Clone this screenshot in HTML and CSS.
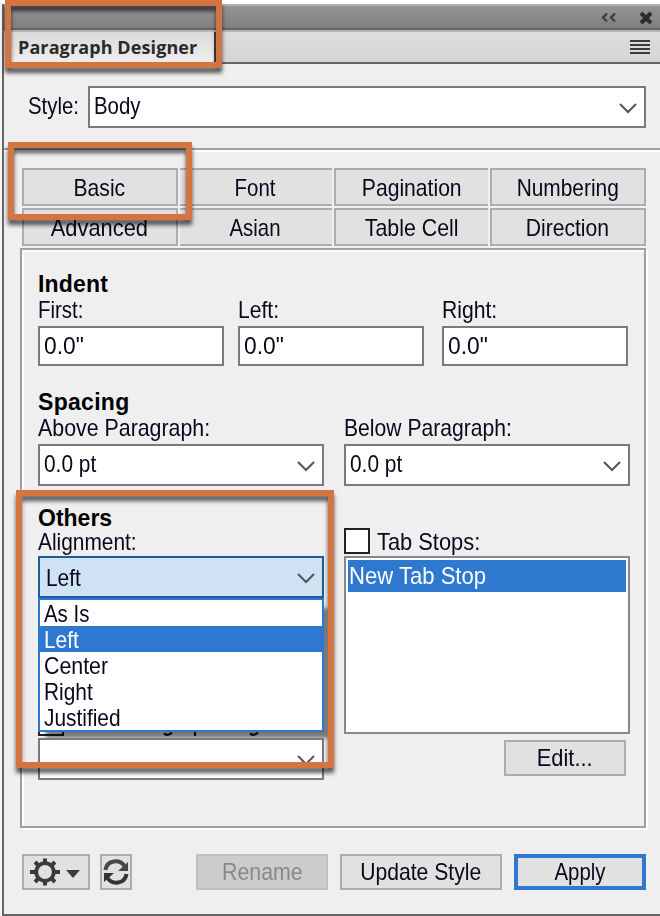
FILE: index.html
```html
<!DOCTYPE html>
<html lang="en">
<head>
<meta charset="utf-8">
<title>Paragraph Designer</title>
<link rel="stylesheet" href="styles.css">
</head>
<body>
<main class="window">
  <header class="titlebar">
    <svg class="collapse" width="16" height="12" viewBox="0 0 16 12"><path d="M6 1.500 2 5.500 6 9.500M14 1.500 10 5.500 14 9.500" fill="none" stroke="#404040" stroke-width="2.400"/></svg>
    <svg class="close" width="14" height="14" viewBox="0 0 14 14"><path d="M2 2 12 12M12 2 2 12" fill="none" stroke="#2b2b2b" stroke-width="4"/></svg>
  </header>
  <div class="tabbar">
    <div class="tab"><span class="tabname">Paragraph Designer</span></div>
    <div class="burger"><i></i><i></i><i></i><i></i></div>
  </div>
  <section class="style-row">
    <span class="t n85 style-label">Style:</span>
    <div class="field combo style-combo"><span class="t n85">Body</span><svg class="chev" viewBox="0 0 18 12"><path d="M1 2 9 10 17 2"/></svg></div>
  </section>
  <nav class="tabs">
    <button class="btn"><span class="t n88">Basic</span></button>
    <button class="btn no-left no-right"><span class="t n85">Font</span></button>
    <button class="btn no-right"><span class="t n88">Pagination</span></button>
    <button class="btn"><span class="t n87">Numbering</span></button>
    <button class="btn"><span class="t n91">Advanced</span></button>
    <button class="btn no-left no-right"><span class="t n85">Asian</span></button>
    <button class="btn no-right"><span class="t n89">Table Cell</span></button>
    <button class="btn"><span class="t n88">Direction</span></button>
  </nav>
  <section class="group">
    <div class="indent">
      <h2>Indent</h2>
      <div class="triple">
        <label><span class="t n85">First:</span><div class="field"><span class="t n95">0.0"</span></div></label>
        <label><span class="t n88">Left:</span><div class="field"><span class="t n95">0.0"</span></div></label>
        <label><span class="t n88">Right:</span><div class="field"><span class="t n95">0.0"</span></div></label>
      </div>
    </div>
    <div class="spacing">
      <h2 class="h-spacing">Spacing</h2>
      <div class="pair">
        <label><span class="t n89">Above Paragraph:</span><div class="field combo"><span class="t n87">0.0 pt</span><svg class="chev" viewBox="0 0 18 12"><path d="M1 2 9 10 17 2"/></svg></div></label>
        <label><span class="t n88">Below Paragraph:</span><div class="field combo"><span class="t n87">0.0 pt</span><svg class="chev" viewBox="0 0 18 12"><path d="M1 2 9 10 17 2"/></svg></div></label>
      </div>
    </div>
    <div class="pair others">
      <div class="align-col">
        <h2 class="h-others">Others</h2>
        <span class="t n87 label">Alignment:</span>
        <div class="field combo open"><span class="t n87">Left</span><svg class="chev" viewBox="0 0 18 12"><path d="M1 2 9 10 17 2"/></svg></div>
        <ul class="list">
          <li><span class="t n85">As Is</span></li>
          <li class="sel"><span class="t n87">Left</span></li>
          <li><span class="t n89">Center</span></li>
          <li><span class="t n87">Right</span></li>
          <li><span class="t n87">Justified</span></li>
        </ul>
        <svg class="peek" width="286" height="6" viewBox="0 0 286 6"><path d="M1 0V3H25V0" fill="#fff" stroke="#222" stroke-width="2"/><path d="M126 1.500Q130 4.500 134 .5M212 1.500Q216 4.500 220 .5M157 0V4" fill="none" stroke="#141432" stroke-width="2.200"/></svg>
        <div class="field combo"><span></span><svg class="chev" viewBox="0 0 18 12"><path d="M1 2 9 10 17 2"/></svg></div>
      </div>
      <div class="stops-col">
        <div class="check-row"><span class="checkbox"></span><span class="t n91">Tab Stops:</span></div>
        <div class="listbox"><div class="row"><span class="t n92">New Tab Stop</span></div></div>
        <button class="btn edit"><span class="t n91">Edit...</span></button>
      </div>
    </div>
  </section>
  <footer class="footer">
    <button class="btn gear">
      <svg width="30" height="28" viewBox="-15 -14 30 28"><g fill="none" stroke="#3b3b3b"><circle r="8.800" stroke-width="3.800"/><path stroke-width="4" d="M0-13.500V-9M0 13.500V9M-15 0H-9M15 0H9M-10-10-7-7M10 10 7 7M-10 10-7 7M10-10 7-7"/></g></svg>
      <svg width="14" height="8" viewBox="0 0 14 8"><path d="M0 0H14L7 8Z" fill="#3b3b3b"/></svg>
    </button>
    <button class="btn refresh">
      <svg width="26" height="28" viewBox="0 0 26 28"><g fill="none" stroke="#484848" stroke-width="4"><path d="M2.500 12C4 1.500 17 1 21.500 8"/><path d="M23.500 16C22 26.500 9 27 4.500 20" stroke="#333"/></g><path d="M25 4V13H15Z" fill="#484848"/><path d="M1 24V15H11Z" fill="#333"/></svg>
    </button>
    <button class="btn rename"><span class="t n89">Rename</span></button>
    <button class="btn update"><span class="t n88">Update Style</span></button>
    <button class="btn apply"><span class="t n85">Apply</span></button>
  </footer>
</main>
<div class="mark mark-title"></div>
<div class="mark mark-basic"></div>
<div class="mark mark-others"></div>
</body>
</html>
```
FILE: styles.css
```css
* { box-sizing: border-box; }
body {
  margin: 0;
  width: 660px;
  height: 916px;
  overflow: hidden;
  position: relative;
  padding: 4px 0 0 2px;
  background: linear-gradient(90deg, #f4f4f4 2px, #fff 2px);
  font-family: "Liberation Sans", sans-serif;
  font-size: 24px;
  line-height: 26px;
  color: #08081a;
}
h2, ul { margin: 0; padding: 0; list-style: none; }
.window {
  height: 912px;
  background: #efefef;
  border-left: 2px solid #666;
  border-bottom: 2px solid #666;
}
.t { display: inline-block; white-space: nowrap; transform-origin: 0 50%; }
.btn .t { transform-origin: 50% 50%; }
.tabs .t { padding-top: 1px; margin: 1px 1px 0 0; }
.n85 { transform: scaleX(.85); }
.n87 { transform: scaleX(.87); }
.n88 { transform: scaleX(.88); }
.n89 { transform: scaleX(.89); }
.n91 { transform: scaleX(.91); }
.n92 { transform: scaleX(.92); }
.n95 { transform: scaleX(.95); }

.titlebar {
  height: 28px;
  border-top: 2px solid #b0b0b0;
  background: linear-gradient(#949494, #7f7f7f 22px, #666 22px, #666 24px, #b6b6b6 24px);
  display: flex;
  justify-content: flex-end;
  gap: 22px;
  padding: 5px 7px 0 0;
}
.collapse { margin-top: 1px; }
.tabbar {
  height: 32px;
  border-bottom: 2px solid #666;
  background: linear-gradient(#dddddd, #d5d5d5);
  display: flex;
  justify-content: space-between;
}
.tab {
  width: 212px;
  height: 32px;
  border-right: 2px solid #444;
  background: linear-gradient(#dadada, #efefef);
  padding: 2px 0 0 14px;
}
.tabname {
  display: block;
  font: bold 18px/26px "Open Sans", sans-serif;
  letter-spacing: .1px;
  color: #2a2a2a;
  white-space: nowrap;
}
.burger { width: 20px; margin: 8px 10px 0 0; display: flex; flex-direction: column; gap: 2px; }
.burger i { height: 2px; background: #3a3a3a; }

.style-row {
  height: 88px;
  padding: 22px 14px 0 24px;
  display: flex;
  border-bottom: 2px solid #fff;
  box-shadow: inset 0 -2px #a0a0a0;
}
.style-label { width: 60px; padding-top: 7px; }
.field {
  height: 40px;
  border: 2px solid #7a7a7a;
  background: #fff;
  padding: 5px 4px;
  display: flex;
}
.combo { height: 42px; justify-content: space-between; padding: 5px 7px 0 4px; }
.style-combo { flex: 1; height: 42px; }
.chev { width: 18px; height: 12px; margin-top: 9px; fill: none; stroke: #555; stroke-width: 2; }

.tabs {
  padding: 16px 14px 0 18px;
  display: grid;
  grid-template-columns: 156px 152px 154px 156px;
  gap: 2px;
}
.btn {
  height: 38px;
  border: 2px solid #adadad;
  background: #e1e1e1;
  padding: 0;
  font: inherit;
  color: inherit;
  display: flex;
  align-items: center;
  justify-content: center;
}
.no-left { border-left: 0; }
.no-right { border-right: 0; }

.group {
  height: 580px;
  margin: 2px 14px 0 16px;
  border: 2px solid #a0a0a0;
  box-shadow: inset 2px 2px #fff, 2px 2px #fff;
  padding: 21px 14px 0 16px;
}
h2 { font-size: 23px; line-height: 26px; letter-spacing: .2px; color: #000; }
.indent { height: 118px; }
.triple { display: flex; }
.triple label { width: 186px; margin-right: 14px; }
.triple label + label { margin-right: 18px; }
.triple label:last-child { margin-right: 0; }
.triple .field { margin-top: 3px; }
.triple label > .t { display: block; }
.spacing { height: 116px; }
.h-spacing { height: 25px; line-height: 27px; letter-spacing: .3px; }
.spacing label > .t { height: 26px; padding-top: 1px; }
.spacing .field { margin-top: 4px; }
.pair { display: grid; grid-template-columns: 286px 286px; gap: 20px; }
.pair label > .t, .label { display: block; }
.h-others { height: 24px; line-height: 26px; letter-spacing: 0; }
.align-col { position: relative; }
.open { margin-top: 1px; background: #cfe2f3; border-color: #1f5a9b; padding: 7px 7px 0 6px; }
.open .chev { margin-top: 7px; }
.list {
  position: relative;
  height: 134px;
  border: 2px solid #2f78d0;
  background: #fff;
  box-shadow: 6px 8px 4px -2px rgba(0, 0, 0, .5);
}
.list li { height: 26px; line-height: 28px; padding-left: 4px; }
.list .t { height: 26px; vertical-align: top; }
.list .sel, .listbox .row { background: #2f78d0; color: #fff; }
.peek { display: block; }
.align-col > .combo:last-child { position: relative; }

.stops-col { padding-top: 22px; }
.check-row { display: flex; gap: 7px; height: 30px; margin-bottom: -1px; padding-top: 1px; }
.checkbox { width: 26px; height: 26px; border: 2px solid #222; background: #fff; }
.check-row .t { padding-top: 1px; }
.listbox { height: 178px; border: 2px solid #828790; background: #fff; padding: 2px; }
.listbox .row { height: 32px; padding: 3px 0 0 1px; }
.edit { width: 122px; height: 36px; margin: 6px 0 0 160px; }

.footer { display: flex; padding: 26px 14px 0 18px; }
.footer .btn { height: 36px; }
.footer .gear { width: 68px; margin-right: 10px; gap: 6px; padding-right: 2px; }
.gear svg:last-child { margin-top: 4px; }
.footer .refresh { width: 32px; margin-right: 64px; }
.footer .rename { width: 132px; margin-right: 12px; background: #ccc; border-color: #bfbfbf; color: #888; }
.footer .update { width: 162px; margin-right: 12px; }
.footer .apply { width: 132px; border: 4px solid #2f78d0; }

.mark {
  position: absolute;
  border: 6px solid #d37443;
  filter: drop-shadow(0 5px 2px rgba(0, 0, 0, .65));
}
.mark-title { left: 5px; top: 0; width: 217px; height: 68px; }
.mark-basic { left: 8px; top: 142px; width: 184px; height: 78px; }
.mark-others { left: 16px; top: 490px; width: 318px; height: 278px; }
```
